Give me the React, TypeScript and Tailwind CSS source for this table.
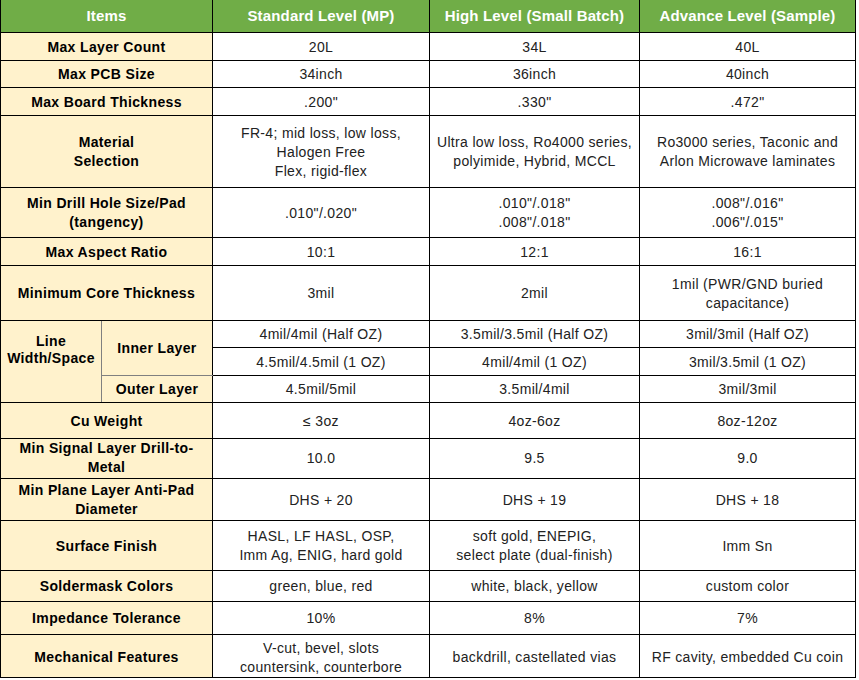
import React from "react";

const B = "border border-black";
const itemBase = `${B} bg-[#FFF2CC] text-black font-bold text-center align-middle px-1 leading-[19px] tracking-[0.35px]`;
const valBase = `${B} bg-white text-[#222] text-center align-middle px-1 leading-[19px] tracking-[0.33px]`;
const item = `${itemBase} pt-[2px]`;
const val = `${valBase} pt-[2px]`;
const itemLow = `${itemBase} pt-[4px]`;
const valLow = `${valBase} pt-[4px]`;

type Row = { h: number; label: React.ReactNode; v: React.ReactNode[]; pad?: "tight" | "low" };

const rowsTop: Row[] = [
  { h: 28, label: "Max Layer Count", v: ["20L", "34L", "40L"] },
  { h: 27, label: "Max PCB Size", v: ["34inch", "36inch", "40inch"] },
  { h: 28, label: "Max Board Thickness", v: ['.200"', '.330"', '.472"'] },
  {
    h: 72,
    label: (
      <>
        Material
        <br />
        Selection
      </>
    ),
    v: [
      <>
        FR-4; mid loss, low loss,
        <br />
        Halogen Free
        <br />
        Flex, rigid-flex
      </>,
      <>
        Ultra low loss, Ro4000 series,
        <br />
        polyimide, Hybrid, MCCL
      </>,
      <>
        Ro3000 series, Taconic and
        <br />
        Arlon Microwave laminates
      </>,
    ],
  },
  {
    h: 50,
    label: (
      <>
        Min Drill Hole Size/Pad
        <br />
        (tangency)
      </>
    ),
    v: [
      '.010"/.020"',
      <>
        .010"/.018"
        <br />
        .008"/.018"
      </>,
      <>
        .008"/.016"
        <br />
        .006"/.015"
      </>,
    ],
  },
  { h: 28, label: "Max Aspect Ratio", v: ["10:1", "12:1", "16:1"] },
  {
    h: 55,
    label: "Minimum Core Thickness",
    v: [
      "3mil",
      "2mil",
      <>
        1mil (PWR/GND buried
        <br />
        capacitance)
      </>,
    ],
  },
];

const rowsBottom: Row[] = [
  { h: 36, label: "Cu Weight", v: ["≤ 3oz", "4oz-6oz", "8oz-12oz"] },
  {
    h: 40,
    pad: "tight",
    label: (
      <>
        Min Signal Layer Drill-to-
        <br />
        Metal
      </>
    ),
    v: ["10.0", "9.5", "9.0"],
  },
  {
    h: 42,
    label: (
      <>
        Min Plane Layer Anti-Pad
        <br />
        Diameter
      </>
    ),
    v: ["DHS + 20", "DHS + 19", "DHS + 18"],
  },
  {
    h: 50,
    label: "Surface Finish",
    v: [
      <>
        HASL, LF HASL, OSP,
        <br />
        Imm Ag, ENIG, hard gold
      </>,
      <>
        soft gold, ENEPIG,
        <br />
        select plate (dual-finish)
      </>,
      "Imm Sn",
    ],
  },
  { h: 31, label: "Soldermask Colors", v: ["green, blue, red", "white, black, yellow", "custom color"] },
  { h: 33, label: "Impedance Tolerance", v: ["10%", "8%", "7%"] },
  {
    h: 43,
    pad: "low",
    label: "Mechanical Features",
    v: [
      <>
        V-cut, bevel, slots
        <br />
        countersink, counterbore
      </>,
      "backdrill, castellated vias",
      "RF cavity, embedded Cu coin",
    ],
  },
];

function renderRows(rows: Row[]) {
  return rows.map((r, i) => {
    const ic = r.pad === "tight" ? itemBase : r.pad === "low" ? itemLow : item;
    const vc = r.pad === "tight" ? valBase : r.pad === "low" ? valLow : val;
    return (
      <tr key={i} style={{ height: r.h }}>
        <td colSpan={2} className={ic}>
          {r.label}
        </td>
        {r.v.map((x, j) => (
          <td key={j} className={vc}>
            {x}
          </td>
        ))}
      </tr>
    );
  });
}

export default function App() {
  return (
    <div className="w-[859px] h-[680px] bg-white overflow-hidden">
      <table
        className="table-fixed border-collapse w-[856px] text-[14px]"
        style={{ fontFamily: '"Liberation Sans", Arial, sans-serif' }}
      >
        <colgroup>
          <col className="w-[101px]" />
          <col className="w-[111px]" />
          <col className="w-[217px]" />
          <col className="w-[210px]" />
          <col className="w-[216px]" />
        </colgroup>
        <tbody>
          <tr style={{ height: 32 }}>
            {["Items", "Standard Level (MP)", "High Level (Small Batch)", "Advance Level (Sample)"].map((h, i) => (
              <td
                key={i}
                colSpan={i === 0 ? 2 : 1}
                className="border border-black border-t-0 bg-[#70AD47] text-white font-bold text-[15px] tracking-[0.15px] text-center align-middle"
              >
                {h}
              </td>
            ))}
          </tr>
          {renderRows(rowsTop)}
          <tr style={{ height: 27 }}>
            <td
              rowSpan={3}
              className="border border-black border-r-[#808080] bg-[#FFF2CC] text-black font-bold text-center align-middle leading-[17px] pb-[22px] tracking-[0.35px]"
            >
              Line
              <br />
              Width/Space
            </td>
            <td
              rowSpan={2}
              className="border border-black border-l-[#808080] border-b-[#808080] bg-[#FFF2CC] text-black font-bold text-center align-middle pt-[2px] tracking-[0.35px]"
            >
              Inner Layer
            </td>
            <td className={val}>4mil/4mil (Half OZ)</td>
            <td className={val}>3.5mil/3.5mil (Half OZ)</td>
            <td className={val}>3mil/3mil (Half OZ)</td>
          </tr>
          <tr style={{ height: 28 }}>
            <td className={val}>4.5mil/4.5mil (1 OZ)</td>
            <td className={val}>4mil/4mil (1 OZ)</td>
            <td className={val}>3mil/3.5mil (1 OZ)</td>
          </tr>
          <tr style={{ height: 27 }}>
            <td className="border border-black border-l-[#808080] border-t-[#808080] bg-[#FFF2CC] text-black font-bold text-center align-middle pt-[2px] tracking-[0.35px]">
              Outer Layer
            </td>
            <td className={val}>4.5mil/5mil</td>
            <td className={val}>3.5mil/4mil</td>
            <td className={val}>3mil/3mil</td>
          </tr>
          {renderRows(rowsBottom)}
        </tbody>
      </table>
    </div>
  );
}
